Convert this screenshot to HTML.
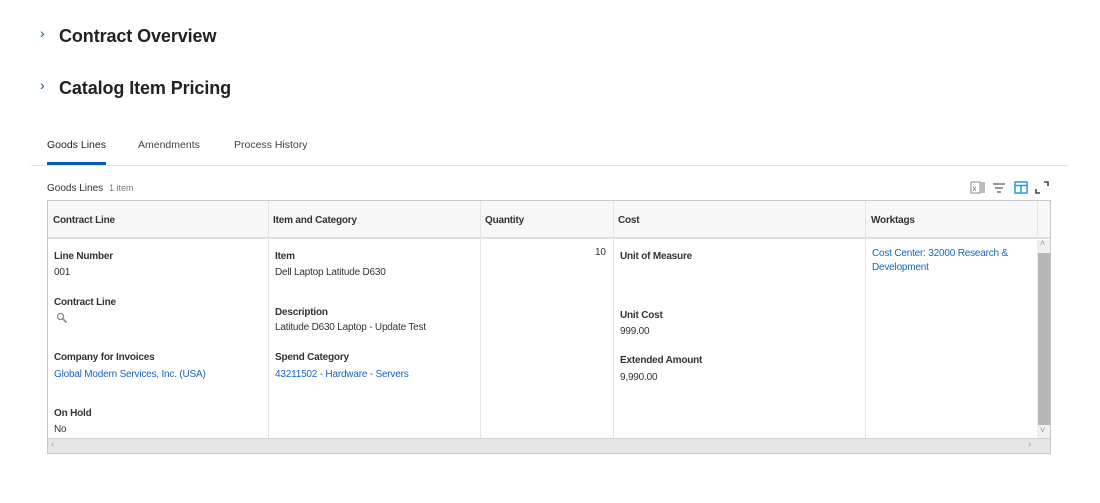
<!DOCTYPE html>
<html><head><meta charset="utf-8"><style>
*{margin:0;padding:0;box-sizing:border-box}
body{width:1100px;height:503px;background:#fff;font-family:"Liberation Sans",sans-serif;color:#333;position:relative;overflow:hidden}
.a{position:absolute;white-space:nowrap}
h2{position:absolute;font-size:18px;font-weight:bold;color:#222;left:59px;letter-spacing:-0.1px}
.chev{position:absolute;left:40px;color:#0a58b5;font-size:14px}
.tab{font-size:10.5px;color:#444}
.lbl{font-size:10px;font-weight:bold;color:#333;letter-spacing:-0.2px}
.val{font-size:10px;color:#333;letter-spacing:-0.2px}
.lnk{font-size:10px;color:#1665c0;letter-spacing:-0.2px}
</style></head><body>
<span class="chev a" style="top:25px">&#x203A;</span>
<h2 style="top:26px">Contract Overview</h2>
<span class="chev a" style="top:77px">&#x203A;</span>
<h2 style="top:78px">Catalog Item Pricing</h2>
<div class="a tab" style="left:47px;top:139px;color:#222">Goods Lines</div>
<div class="a tab" style="left:138px;top:139px">Amendments</div>
<div class="a tab" style="left:234px;top:139px">Process History</div>
<div class="a" style="left:31px;top:165px;width:1037px;height:1px;background:#e2e4e8"></div>
<div class="a" style="left:47px;top:162px;width:59px;height:3px;background:#0a58b5"></div>
<div class="a" style="left:47px;top:183px;font-size:10px;color:#333">Goods Lines <span style="color:#777;font-size:9px;margin-left:3px">1 item</span></div>
<svg class="a" style="left:970px;top:180px" width="80" height="16">
<rect x="1" y="2" width="9" height="11" fill="none" stroke="#888"/><text x="2.5" y="11" font-size="8" fill="#666" font-family="Liberation Sans">x</text><rect x="10" y="2" width="5" height="11" fill="#bbb"/>
<path d="M23 4h12M25 8h8M27 12h4" stroke="#777" stroke-width="1.5"/>
<rect x="45" y="2" width="12" height="11" fill="none" stroke="#2f9bd6" stroke-width="1.5"/><path d="M45 5.5h12M51 5.5v7.5" stroke="#2f9bd6" stroke-width="1.5"/>
<path d="M66 9v4h4M74 2h4v4" stroke="#444" stroke-width="1.6" fill="none"/>
</svg>
<div class="a" style="left:47px;top:200px;width:1004px;height:254px;border:1px solid #c8c8c8"></div>
<div class="a" style="left:48px;top:201px;width:1002px;height:38px;background:#f7f7f7;border-bottom:2px solid #dedede"></div>
<div class="a" style="left:268px;top:201px;width:1px;height:237px;background:#e4e4e4"></div>
<div class="a" style="left:480px;top:201px;width:1px;height:237px;background:#e4e4e4"></div>
<div class="a" style="left:613px;top:201px;width:1px;height:237px;background:#e4e4e4"></div>
<div class="a" style="left:865px;top:201px;width:1px;height:237px;background:#e4e4e4"></div>
<div class="a" style="left:1037px;top:201px;width:1px;height:38px;background:#e4e4e4"></div>
<div class="a lbl" style="left:53px;top:215px">Contract Line</div>
<div class="a lbl" style="left:273px;top:215px">Item and Category</div>
<div class="a lbl" style="left:485px;top:215px">Quantity</div>
<div class="a lbl" style="left:618px;top:215px">Cost</div>
<div class="a lbl" style="left:871px;top:215px">Worktags</div>
<div class="a" style="left:1037px;top:240px;width:13px;height:198px;background:#f0f0f0"></div>
<div class="a" style="left:1038px;top:253px;width:12px;height:172px;background:#b7b7b7"></div>
<div class="a" style="left:1040px;top:238px;font-size:9px;color:#999">&#x2C4;</div>
<div class="a" style="left:1040px;top:425px;font-size:9px;color:#999">&#x2C5;</div>
<div class="a" style="left:48px;top:438px;width:1002px;height:15px;background:#e6e6e6;border-top:1px solid #d0d0d0"></div>
<div class="a" style="left:51px;top:439px;font-size:10px;color:#aaa">&#x2039;</div>
<div class="a" style="left:1028px;top:439px;font-size:10px;color:#999">&#x203A;</div>
<div class="a lbl" style="left:54px;top:251px">Line Number</div>
<div class="a val" style="left:54px;top:267px">001</div>
<div class="a lbl" style="left:54px;top:297px">Contract Line</div>
<svg class="a" style="left:56px;top:312px" width="12" height="12"><circle cx="4.5" cy="4.5" r="3" fill="none" stroke="#888" stroke-width="1.3"/><path d="M7 7l3.5 3.5" stroke="#888" stroke-width="1.6"/></svg>
<div class="a lbl" style="left:54px;top:352px">Company for Invoices</div>
<div class="a lnk" style="left:54px;top:369px">Global Modern Services, Inc. (USA)</div>
<div class="a lbl" style="left:54px;top:408px">On Hold</div>
<div class="a val" style="left:54px;top:424px">No</div>
<div class="a lbl" style="left:275px;top:251px">Item</div>
<div class="a val" style="left:275px;top:267px">Dell Laptop Latitude D630</div>
<div class="a lbl" style="left:275px;top:307px">Description</div>
<div class="a val" style="left:275px;top:322px">Latitude D630 Laptop - Update Test</div>
<div class="a lbl" style="left:275px;top:352px">Spend Category</div>
<div class="a lnk" style="left:275px;top:369px">43211502 - Hardware - Servers</div>
<div class="a val" style="left:595px;top:247px">10</div>
<div class="a lbl" style="left:620px;top:251px">Unit of Measure</div>
<div class="a lbl" style="left:620px;top:310px">Unit Cost</div>
<div class="a val" style="left:620px;top:326px">999.00</div>
<div class="a lbl" style="left:620px;top:355px">Extended Amount</div>
<div class="a val" style="left:620px;top:372px">9,990.00</div>
<div class="a lnk" style="left:872px;top:247px;line-height:14px">Cost Center: 32000 Research &amp;<br>Development</div>
</body></html>
